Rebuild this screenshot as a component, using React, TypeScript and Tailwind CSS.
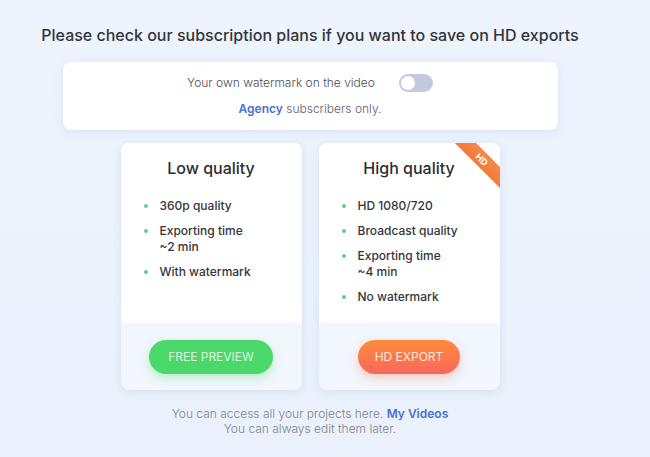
import { useState } from "react";

type Plan = {
  title: string;
  features: string[];
  cta: string;
  hd?: boolean;
};

const plans: Plan[] = [
  {
    title: "Low quality",
    features: ["360p quality", "Exporting time\n~2 min", "With watermark"],
    cta: "FREE PREVIEW",
  },
  {
    title: "High quality",
    features: ["HD 1080/720", "Broadcast quality", "Exporting time\n~4 min", "No watermark"],
    cta: "HD EXPORT",
    hd: true,
  },
];

function Toggle({ on, onChange }: { on: boolean; onChange: (v: boolean) => void }) {
  return (
    <button
      className="w-[34px] h-[18px] rounded-full bg-[#c5c8e1] p-[2px] flex items-center"
      onClick={() => onChange(!on)}
    >
      <span className={`block w-[14px] h-[14px] rounded-full bg-white ${on ? "ml-[16px]" : ""}`} />
    </button>
  );
}

function PlanCard({ plan }: { plan: Plan }) {
  return (
    <div className="w-[181px] h-[247px] rounded-lg bg-[#f2f6fd] shadow-[0_2px_10px_rgba(170,190,225,0.35)] flex flex-col overflow-hidden relative">
      <div className="bg-white h-[180px] px-[23px] pt-[14px]">
        <h3 className="text-[16px] leading-[22px] font-medium text-[#2b2d33] text-center">{plan.title}</h3>
        <ul className="mt-[19px] flex flex-col gap-[9px]">
          {plan.features.map((f) => (
            <li key={f} className="flex text-[12px] leading-[16px] font-medium text-[#33363d]">
              <span className="w-[16px] shrink-0 pt-[6px]">
                <span className="block w-[4px] h-[4px] rounded-full bg-[#5bd088]" />
              </span>
              <span className="whitespace-pre-line">{f}</span>
            </li>
          ))}
        </ul>
      </div>
      <div className="flex-1 flex items-center justify-center">
        <button
          className={
            plan.hd
              ? "h-[34px] px-[17px] rounded-full text-[#fde6d8] text-[12px] bg-gradient-to-b from-[#ff8a38] to-[#f8675b] shadow-[0_4px_10px_rgba(250,120,80,0.35)]"
              : "h-[34px] px-[19px] rounded-full text-[#daf7df] text-[12px] bg-[#4bd86a] shadow-[0_4px_10px_rgba(80,220,110,0.35)]"
          }
        >
          {plan.cta}
        </button>
      </div>
      {plan.hd && (
        <div className="absolute top-0 right-0 w-[52px] h-[52px] overflow-hidden pointer-events-none">
          <div className="absolute top-[9px] right-[-22px] w-[80px] h-[15px] rotate-45 bg-gradient-to-b from-[#f38a4a] to-[#f57a38] flex items-center justify-center text-white text-[9px] font-bold">
            HD
          </div>
        </div>
      )}
    </div>
  );
}

export default function App() {
  const [watermark, setWatermark] = useState(false);

  return (
    <div
      className="min-h-[457px] w-full pr-[30px] bg-gradient-to-b from-[#eef4fd] to-[#eaf1fc] flex flex-col items-center"
      style={{ fontFamily: "Inter, 'Open Sans', sans-serif" }}
    >
      <h1 className="mt-[23px] text-[16px] leading-[24px] font-medium text-[#32343a]">
        Please check our subscription plans if you want to save on HD exports
      </h1>

      <div className="mt-[15px] w-[495px] h-[68px] bg-white rounded-lg shadow-[0_2px_10px_rgba(170,190,225,0.3)] flex flex-col items-center pt-[12px]">
        <div className="flex items-center gap-[24px] text-[12px] font-light text-[#4a4d55]">
          <span>Your own watermark on the video</span>
          <Toggle on={watermark} onChange={setWatermark} />
        </div>
        <p className="mt-[8px] text-[12px] font-light text-[#5e6168]">
          <a className="text-[#4a6fd3] font-semibold">Agency</a> subscribers only.
        </p>
      </div>

      <div className="mt-[13px] flex gap-[17px]">
        {plans.map((p) => (
          <PlanCard key={p.title} plan={p} />
        ))}
      </div>

      <div className="mt-[16px] text-center text-[12px] leading-[15px] font-light text-[#80838b]">
        <p>
          You can access all your projects here.{" "}
          <a className="text-[#4a6fd3] font-semibold">My Videos</a>
        </p>
        <p>You can always edit them later.</p>
      </div>
    </div>
  );
}
